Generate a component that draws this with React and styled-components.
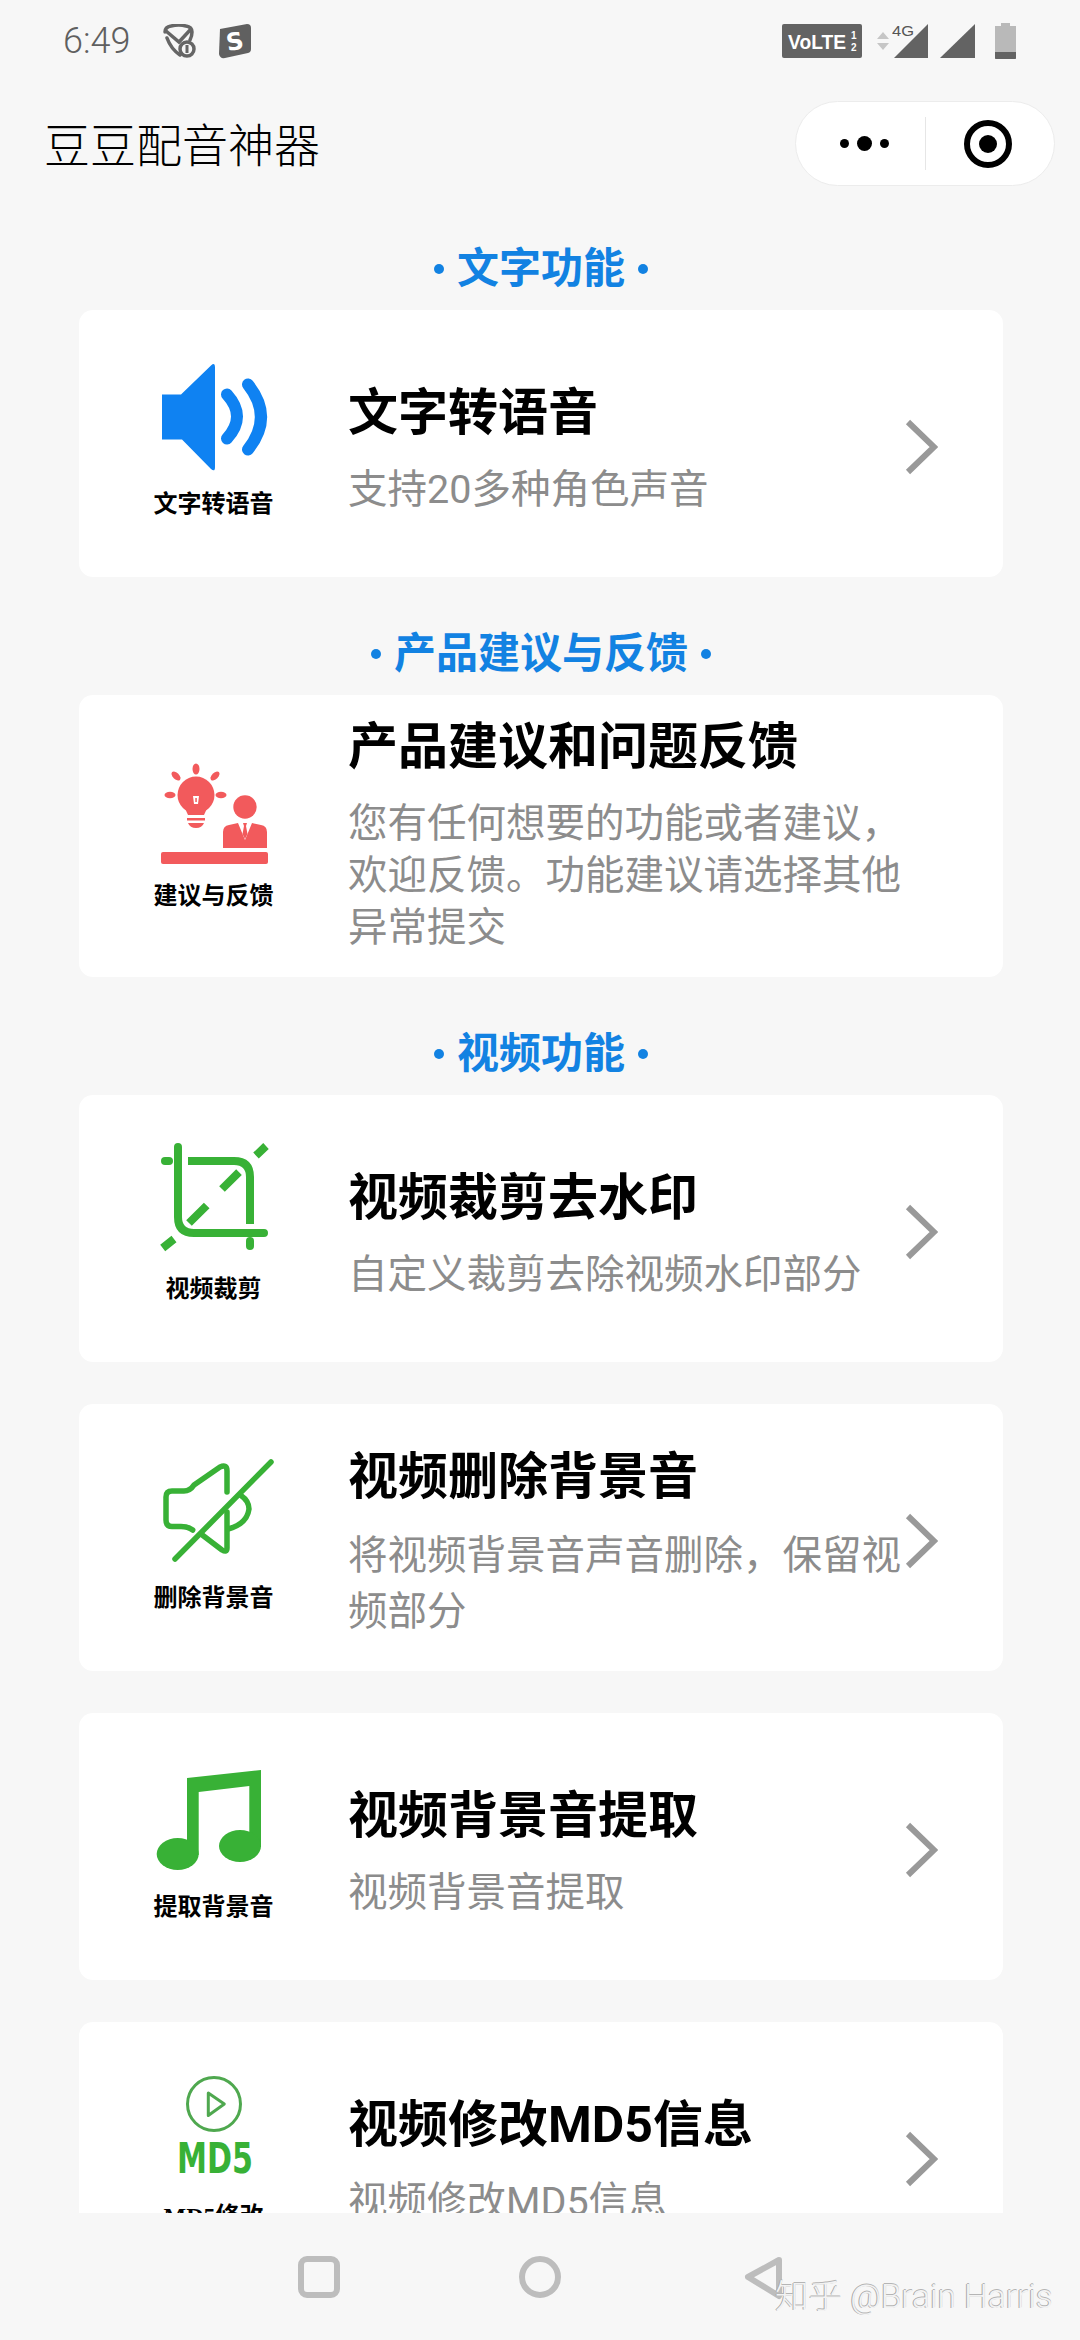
import React from "react";
import styled, { createGlobalStyle } from "styled-components";

const SANS = `Roboto, "Noto Sans CJK SC", sans-serif`;
const BLUE = "#1282e2";
const GREEN = "#38b136";
const RED = "#f25a5c";

const Global = createGlobalStyle`
  html, body { margin: 0; padding: 0; background: #f7f7f7; }
  * { box-sizing: border-box; }
`;

const Phone = styled.div`
  position: relative;
  width: 1080px;
  height: 2340px;
  display: flex;
  flex-direction: column;
  overflow: hidden;
  background: #f7f7f7;
  font-family: ${SANS};
`;

const StatusBar = styled.div`
  height: 90px;
  flex: none;
  padding: 0 64px 8px 63px;
  display: flex;
  align-items: center;
  justify-content: space-between;
`;
const StatusGroup = styled.div`
  display: flex;
  align-items: center;
`;
const Clock = styled.span`
  font-size: 36px;
  line-height: 40px;
  font-weight: 300;
  color: #5f5f5f;
  width: 99px;
`;
const StatusIcon = styled.svg`
  display: block;
  flex: none;
  margin-left: ${(p) => p.$gap || 0}px;
`;

const NavBar = styled.div`
  height: 102px;
  flex: none;
  padding: 11px 25px 6px 44px;
  display: flex;
  align-items: center;
  justify-content: space-between;
`;
const PageTitle = styled.h1`
  margin: 5px 0 0;
  font-size: 46px;
  line-height: 60px;
  font-weight: 300;
  color: #000;
`;
const Capsule = styled.div`
  width: 260px;
  height: 85px;
  border-radius: 43px;
  background: #fff;
  border: 1px solid #ececec;
  display: flex;
  align-items: center;
`;
const MoreDots = styled.div`
  width: 129px;
  display: flex;
  align-items: center;
  justify-content: flex-end;
  gap: 8px;
  padding-right: 36px;
`;
const Dot = styled.span`
  width: ${(p) => (p.$big ? 15 : 9)}px;
  height: ${(p) => (p.$big ? 15 : 9)}px;
  border-radius: 50%;
  background: #000;
`;
const CapsuleRule = styled.span`
  width: 1px;
  height: 53px;
  background: #e6e6e6;
`;
const TargetSlot = styled.div`
  flex: 1;
  display: flex;
  justify-content: center;
  padding-right: 4px;
`;

const Scroll = styled.main`
  flex: 1;
  min-height: 0;
  overflow: hidden;
  padding: 0 77px 0 79px;
`;
const SectionHead = styled.div`
  padding: 46px 0 10px;
  display: flex;
  align-items: center;
  justify-content: center;
  gap: 13px;
  font-size: 42px;
  line-height: 62px;
  font-weight: 700;
  color: ${BLUE};
`;
const HeadDot = styled.span`
  width: 10px;
  height: 10px;
  border-radius: 50%;
  background: ${BLUE};
`;
const CardStack = styled.div`
  display: flex;
  flex-direction: column;
  gap: 42px;
`;
const Card = styled.section`
  height: ${(p) => (p.$tall ? 282 : 267)}px;
  flex: none;
  border-radius: 14px;
  background: #fff;
  display: flex;
  align-items: center;
`;
const Tile = styled.div`
  width: 269px;
  height: 200px;
  flex: none;
  display: flex;
  flex-direction: column;
  align-items: center;
`;
const TileArt = styled.svg`
  display: block;
  flex: none;
`;
const TileLabel = styled.div`
  font-family: "Liberation Serif", "Noto Sans CJK SC", serif;
  font-size: 24px;
  line-height: 40px;
  font-weight: 700;
  color: #000;
  white-space: nowrap;
`;
const CardBody = styled.div`
  width: 556px;
  flex: none;
  padding: ${(p) => (p.$lift ? "0 0 5px" : "8px 0 0")};
`;
const CardTitle = styled.h2`
  margin: 0 0 17px;
  font-size: 50px;
  line-height: 68px;
  font-weight: 700;
  color: #000;
`;
const CardText = styled.p`
  margin: 0;
  font-size: 39.5px;
  line-height: ${(p) => (p.$loose ? 56 : 52)}px;
  font-weight: 400;
  color: #8c8c8c;
`;
const Chevron = styled.svg`
  display: block;
  flex: none;
  margin: 7px 0 0 0;
`;

const BottomBar = styled.nav`
  height: 127px;
  flex: none;
  display: flex;
  align-items: flex-start;
  padding: 43px 0 0 298px;
  gap: 179px;
  background: #f7f7f7;
`;
const NavSquare = styled.span`
  width: 42px;
  height: 42px;
  border: 6px solid #bdbdbd;
  border-radius: 9px;
`;
const NavCircle = styled.span`
  width: 42px;
  height: 42px;
  border: 6px solid #bdbdbd;
  border-radius: 50%;
`;
const BackArrow = styled.svg`
  display: block;
  margin-left: 4px;
`;
const Watermark = styled.div`
  position: absolute;
  left: 775px;
  top: 2277px;
  font-size: 33.5px;
  line-height: 40px;
  font-weight: 300;
  color: #f3f3f3;
  text-shadow: -1px 0 0 #a9a9a9, 0 -1px 0 #b5b5b5;
  white-space: nowrap;
`;

const Art = ({ children }) => (
  <TileArt width="140" height="140" viewBox="0 0 140 140">
    {children}
  </TileArt>
);

const SpeakerArt = () => (
  <Art>
    <path d="M18 50.5H37L67 21.5Q71 18 71 23V123Q71 128.500 67 125L38 95.500H18Z" fill="#0f82f2" />
    <path d="M83 50.500Q103 72.500 83 94.500M104 40.500Q130 73 104 105.500" fill="none" stroke="#0f82f2" strokeWidth="12" strokeLinecap="round" />
  </Art>
);

const IdeaArt = () => (
  <Art>
    <g fill={RED}>
      <rect x="17" y="116" width="107" height="12" rx="2" />
      <circle cx="52" cy="59" r="18.500" />
      <path d="M39 68H65L60 79H44Z" />
      <rect x="43" y="82" width="18" height="2.500" />
      <path d="M44 87H60Q58 92 52 92Q46 92 44 87Z" />
      <ellipse cx="52" cy="33" rx="3.500" ry="5.500" />
      <ellipse cx="32" cy="40" rx="3.200" ry="5.500" transform="rotate(-45 32 40)" />
      <ellipse cx="71" cy="40" rx="3.200" ry="5.500" transform="rotate(45 71 40)" />
      <ellipse cx="26" cy="59" rx="5.500" ry="3.200" />
      <ellipse cx="77" cy="59" rx="5.500" ry="3.200" />
      <circle cx="101" cy="71" r="11.700" />
      <path d="M79 112V96Q79 90 85 89L94 87L101 104L108 87L117 89Q123 90 123 96V112Z" />
      <path d="M99 87H103L102 90L103.500 98L101 103L98.500 98L100 90Z" />
    </g>
    <path d="M49 60H55L54 68H50Z" fill="#fff" />
    <rect x="51.300" y="62" width="1.500" height="4" fill={RED} />
  </Art>
);

const CropArt = () => (
  <Art>
    <g fill="none" stroke={GREEN} strokeWidth="8">
      <path d="M34 18V88Q34 104 50 104H120" strokeLinecap="round" />
      <path d="M44 32H90Q106 32 106 48V95" />
      <path d="M25 32H21" strokeLinecap="round" />
      <path d="M106 112V117" strokeLinecap="round" />
      <path d="M112 26.500L122 17M78 60L95 43.200M45 94L62.700 76.500M18.700 119L30 110" />
    </g>
  </Art>
);

const MuteArt = () => (
  <Art>
    <g fill="none" stroke={GREEN} strokeWidth="5.500" strokeLinecap="round" strokeLinejoin="round">
      <path d="M83 54V33Q83 26 76 29L50 47Q46 53 40 53H28Q22 53 22 59V82Q22 88.500 28 88.500H37Q44 88.500 48.700 92" />
      <path d="M57 96L78 112Q83 115 83 110V74" />
      <path d="M97 57.500Q105 63 105 71Q103 86 84 91" />
      <path d="M127 24L31 121" />
    </g>
  </Art>
);

const MusicArt = () => (
  <Art>
    <g fill={GREEN}>
      <path d="M43 31L117 23V100H105.300V39L54.700 45V108H43Z" />
      <ellipse cx="33.700" cy="107" rx="21" ry="16" />
      <ellipse cx="96" cy="99" rx="21" ry="16" />
    </g>
  </Art>
);

const Md5Art = () => (
  <Art>
    <circle cx="70" cy="48" r="26.500" fill="none" stroke="#4fa84f" strokeWidth="3" />
    <path d="M64.300 37L80.300 48L64.300 59.500Z" fill="none" stroke="#4fa84f" strokeWidth="3" strokeLinejoin="round" />
    <text x="33" y="116.500" fontFamily="'DejaVu Sans'" fontWeight="700" fontSize="43" fill={GREEN} textLength="76" lengthAdjust="spacingAndGlyphs">MD5</text>
  </Art>
);

const items = {
  tts: { art: <SpeakerArt />, label: "文字转语音", title: "文字转语音", text: "支持20多种角色声音" },
  idea: { art: <IdeaArt />, label: "建议与反馈", title: "产品建议和问题反馈", text: "您有任何想要的功能或者建议，欢迎反馈。功能建议请选择其他异常提交", tall: true, noArrow: true },
  crop: { art: <CropArt />, label: "视频裁剪", title: "视频裁剪去水印", text: "自定义裁剪去除视频水印部分" },
  mute: { art: <MuteArt />, label: "删除背景音", title: "视频删除背景音", text: "将视频背景音声音删除，保留视频部分", loose: true },
  music: { art: <MusicArt />, label: "提取背景音", title: "视频背景音提取", text: "视频背景音提取" },
  md5: { art: <Md5Art />, label: "MD5修改", title: "视频修改MD5信息", text: "视频修改MD5信息" },
};

const FeatureCard = ({ item }) => (
  <Card $tall={item.tall}>
    <Tile>
      {item.art}
      <TileLabel>{item.label}</TileLabel>
    </Tile>
    <CardBody $lift={item.tall}>
      <CardTitle>{item.title}</CardTitle>
      <CardText $loose={item.loose}>{item.text}</CardText>
    </CardBody>
    {!item.noArrow && (
      <Chevron width="34" height="58" viewBox="0 0 34 58">
        <path d="M4 4L30 29L4 54" fill="none" stroke="#999" strokeWidth="6" />
      </Chevron>
    )}
  </Card>
);

const Section = ({ title, children }) => (
  <>
    <SectionHead>
      <HeadDot />
      {title}
      <HeadDot />
    </SectionHead>
    {children}
  </>
);

export default function App() {
  return (
    <Phone>
      <Global />
      <StatusBar>
        <StatusGroup>
          <Clock>6:49</Clock>
          <StatusIcon width="35" height="34" viewBox="0 0 35 34">
            <path d="M3 8Q3 3 9 2Q17 0 24 2Q30 3 30 8Q30 12 28 16M5 14Q9 25 18 31M4 7L17 18L29 5" fill="none" stroke="#666" strokeWidth="3.500" strokeLinecap="round" />
            <circle cx="25" cy="25" r="7" fill="none" stroke="#666" strokeWidth="3.500" />
            <rect x="23.500" y="21" width="3" height="8" fill="#666" />
          </StatusIcon>
          <StatusIcon $gap={19} width="36" height="36" viewBox="0 0 36 36">
            <path d="M4 6L31 1Q35 1 35 5L35 26Q35 29 32 30L9 35Q4 36 3 31Z" fill="#606060" />
            <text x="10" y="27" fontFamily="'DejaVu Sans'" fontWeight="700" fontSize="24" fill="#fff" transform="rotate(-10 18 18)">S</text>
          </StatusIcon>
        </StatusGroup>
        <StatusGroup>
          <StatusIcon width="80" height="34" viewBox="0 0 80 34">
            <rect width="80" height="34" rx="2" fill="#636363" />
            <text x="6" y="25" fontFamily="'Liberation Sans'" fontWeight="700" fontSize="20" fill="#fff" textLength="58" lengthAdjust="spacingAndGlyphs">VoLTE</text>
            <text x="69" y="15" fontFamily="'Liberation Sans'" fontWeight="700" fontSize="10" fill="#fff">1</text>
            <text x="69" y="27" fontFamily="'Liberation Sans'" fontWeight="700" fontSize="10" fill="#fff">2</text>
          </StatusIcon>
          <StatusIcon $gap={14} width="14" height="18" viewBox="0 0 14 18">
            <path d="M7 0L13 7H1ZM1 11H13L7 18Z" fill="#c6c6c6" />
          </StatusIcon>
          <StatusIcon $gap={2} width="36" height="36" viewBox="0 0 36 36">
            <path d="M2 35L36 1V35Z" fill="#636363" />
            <text x="0" y="13" fontFamily="'Liberation Sans'" fontSize="14" fill="#555" textLength="22" lengthAdjust="spacingAndGlyphs">4G</text>
          </StatusIcon>
          <StatusIcon $gap={12} width="35" height="36" viewBox="0 0 35 36">
            <path d="M0 35L35 1V35Z" fill="#636363" />
          </StatusIcon>
          <StatusIcon $gap={20} width="21" height="36" viewBox="0 0 21 36">
            <path d="M6 0H15V3H21V36H0V3H6Z" fill="#b9b9b9" />
            <path d="M0 29H21V35Q21 36 20 36H1Q0 36 0 35Z" fill="#636363" />
          </StatusIcon>
        </StatusGroup>
      </StatusBar>
      <NavBar>
        <PageTitle>豆豆配音神器</PageTitle>
        <Capsule>
          <MoreDots>
            <Dot />
            <Dot $big />
            <Dot />
          </MoreDots>
          <CapsuleRule />
          <TargetSlot>
            <svg width="50" height="50" viewBox="0 0 50 50">
              <circle cx="25" cy="25" r="21" fill="none" stroke="#000" strokeWidth="6" />
              <circle cx="25" cy="25" r="9" fill="#000" />
            </svg>
          </TargetSlot>
        </Capsule>
      </NavBar>
      <Scroll>
        <Section title="文字功能">
          <FeatureCard item={items.tts} />
        </Section>
        <Section title="产品建议与反馈">
          <FeatureCard item={items.idea} />
        </Section>
        <Section title="视频功能">
          <CardStack>
            <FeatureCard item={items.crop} />
            <FeatureCard item={items.mute} />
            <FeatureCard item={items.music} />
            <FeatureCard item={items.md5} />
          </CardStack>
        </Section>
      </Scroll>
      <BottomBar>
        <NavSquare />
        <NavCircle />
        <BackArrow width="40" height="44" viewBox="0 0 40 44">
          <path d="M35 4L4 21L35 40Z" fill="none" stroke="#bdbdbd" strokeWidth="6" strokeLinejoin="round" />
        </BackArrow>
      </BottomBar>
      <Watermark>知乎 @Brain Harris</Watermark>
    </Phone>
  );
}
